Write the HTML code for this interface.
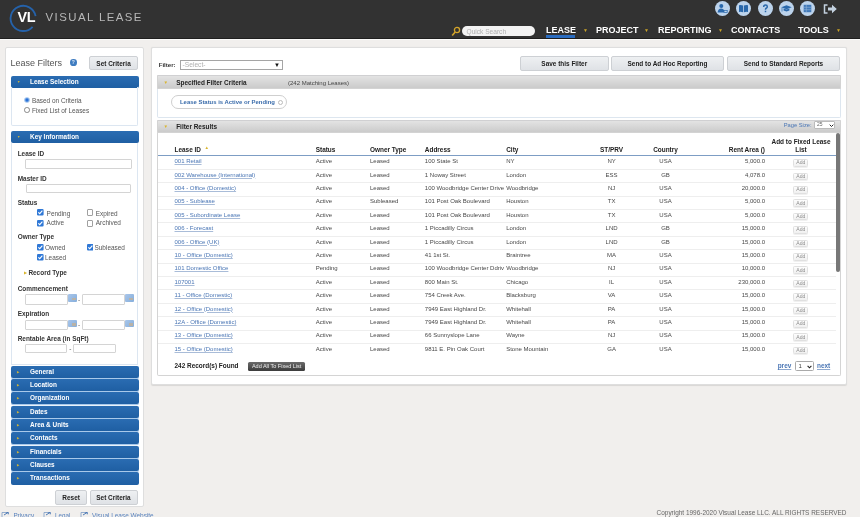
<!DOCTYPE html>
<html><head><meta charset="utf-8">
<style>
*{box-sizing:border-box;margin:0;padding:0}
html,body{width:860px;height:517px;overflow:hidden;background:#f1efed;font-family:"Liberation Sans",sans-serif;color:#333}
.a{position:absolute;white-space:nowrap}
#hdr{left:0;top:0;width:860px;height:38.6px;background:#323232;border-bottom:1px solid #1f1f1f}
.nav{color:#fff;font-weight:bold;font-size:9px;top:24px;line-height:12px}
.car{color:#c9a227;font-size:5px;top:27px;line-height:6px}
.ic{width:15px;height:15px;border-radius:50%;background:#b9d1ea;top:1px}
.panel{background:#fff;border:1px solid #dedede;border-radius:2px}
.bbar{left:11px;width:127.8px;height:12.2px;background:linear-gradient(#2a6cb2,#1f5fa3);border-radius:2px;color:#fff;font-weight:bold;font-size:6.45px;line-height:12px}
.bbar i{position:absolute;left:6px;top:0;color:#cbb13a;font-style:normal;font-size:3.4px}
.bbar.s{box-shadow:0 1.2px 0 #a9c9ea}
.bbar span{position:absolute;left:19px;top:0}
.lbl{font-size:6.45px;font-weight:bold;color:#333;left:17.7px;line-height:8px}
.txt{font-size:6.45px;color:#555;line-height:8px}
.inp{background:#fff;border:1px solid #d4d4d4;border-radius:1px}
.cal{width:8.6px;height:7.5px;background:linear-gradient(135deg,#a9c6ea,#86aedb);border-radius:1px}
.cal:after{content:"";position:absolute;left:3.5px;top:3.5px;width:4px;height:2.5px;background:#b9b2a6}
.cb{width:6.6px;height:6.6px;border-radius:1px}
.cb.on{background:#2f78d6}
.cb.off{border:0.8px solid #a0a0a0;background:#fff;margin:-0.3px 0 0 -0.3px}
.rd{width:5.6px;height:5.6px;border-radius:50%}
.gbtn{background:linear-gradient(#eef0f2,#dfe2e6);border:1px solid #cdd0d4;border-radius:2px;font-size:6.45px;font-weight:bold;color:#222;text-align:center}
.gbar{background:linear-gradient(#e3e3e3,#cbcbcb);border:1px solid #d3d3d3;border-top-color:#d0d0d2;border-radius:1px;font-size:6.45px;font-weight:bold;color:#222}
.gbar i{position:absolute;left:5.5px;top:0;color:#d9b52e;font-style:normal;font-size:4.5px}
.th{font-size:6.45px;font-weight:bold;color:#222;line-height:8px}
.td{font-size:6px;color:#484848;line-height:8px}
.td.c{width:40px;text-align:center}
.td.r{width:60px;text-align:right}
.lk{color:#4a76b5;text-decoration:underline;text-decoration-color:#a9bcd8}
.addb{width:15.2px;height:7.5px;border:1px solid #e0e0e0;border-radius:1.5px;background:linear-gradient(#fdfdfd,#f0f0f0);box-shadow:0 0.5px 0.5px rgba(0,0,0,.12);font-size:5.1px;color:#8c8c8c;text-align:center;line-height:5.8px;padding-top:0.3px}
.sep{left:158px;width:678px;height:1px;background:#eeeeee}
html{filter:blur(0.35px)}
</style></head><body>
<div id="hdr" class="a">
  <svg class="a" style="left:8px;top:3px" width="32" height="30" viewBox="0 0 32 30">
    <path d="M27.6 13.2 A12.6 12.6 0 1 0 24.6 23.8" fill="none" stroke="#2562aa" stroke-width="1.8"/>
  </svg>
  <div class="a" style="left:17.6px;top:10px;color:#fff;font-weight:bold;font-size:14.4px;letter-spacing:-0.4px;line-height:15px">VL</div>
  <div class="a" style="left:45.5px;top:11px;color:#b8b8b8;font-size:11.4px;letter-spacing:1.45px;line-height:13px">VISUAL LEASE</div>

  <svg class="a" style="left:714.8px;top:1.2px" width="15" height="15" viewBox="0 0 15 15"><circle cx="7.5" cy="7.5" r="7.5" fill="#bcd3ec"/><circle cx="6.3" cy="5" r="2" fill="#2a68ab"/><path d="M2.6 11.6 Q3 7.8 6.3 7.6 Q8.2 7.7 9 9 L9 11.6 Z" fill="#2a68ab"/><rect x="8.6" y="9" width="4" height="2.8" rx="0.5" fill="#2a68ab"/><rect x="9.4" y="9.7" width="2.4" height="1.3" fill="#bcd3ec"/></svg>
  <svg class="a" style="left:736px;top:1.2px" width="15" height="15" viewBox="0 0 15 15"><circle cx="7.5" cy="7.5" r="7.5" fill="#bcd3ec"/><path d="M3 4.3 Q5 3.8 7.1 4.6 L7.1 11.3 Q5 10.6 3 11 Z M7.9 4.6 Q10 3.8 12 4.3 L12 11 Q10 10.6 7.9 11.3 Z" fill="#2a68ab"/></svg>
  <svg class="a" style="left:757.5px;top:1.2px" width="15" height="15" viewBox="0 0 15 15"><circle cx="7.5" cy="7.5" r="7.5" fill="#bcd3ec"/><path d="M5.7 5.9 Q5.7 4.1 7.5 4.1 Q9.3 4.1 9.3 5.7 Q9.3 6.7 8.2 7.2 Q7.5 7.6 7.5 8.7" fill="none" stroke="#2a68ab" stroke-width="1.5"/><rect x="6.75" y="9.7" width="1.5" height="1.5" fill="#2a68ab"/></svg>
  <svg class="a" style="left:778.6px;top:1.2px" width="15" height="15" viewBox="0 0 15 15"><circle cx="7.5" cy="7.5" r="7.5" fill="#bcd3ec"/><path d="M2.3 6.3 L7.5 4.3 L12.7 6.3 L7.5 8.3 Z" fill="#2a68ab"/><path d="M4.6 7.4 L4.6 9.6 Q7.5 11.2 10.4 9.6 L10.4 7.4 L7.5 8.6 Z" fill="#2a68ab"/><path d="M3 6.6 L3 10.5" stroke="#2a68ab" stroke-width="0.7"/></svg>
  <svg class="a" style="left:800px;top:1.2px" width="15" height="15" viewBox="0 0 15 15"><circle cx="7.5" cy="7.5" r="7.5" fill="#bcd3ec"/><rect x="3.7" y="3.8" width="7.6" height="7.4" fill="#3f78b8"/><path d="M6.3 3.8 V11.2 M3.7 6.3 H11.3 M3.7 8.7 H11.3" stroke="#8fb0d6" stroke-width="0.6"/></svg>
  <svg class="a" style="left:822.5px;top:3.5px" width="15" height="10" viewBox="0 0 15 10"><path d="M4.5 1 H1.5 V9 H4.5" fill="none" stroke="#c3d1df" stroke-width="1.5"/><path d="M5 3.6 H9 V0.8 L13.8 5 L9 9.2 V6.4 H5 Z" fill="#c3d1df"/></svg>
  <svg class="a" style="left:450.5px;top:25.5px" width="10" height="11" viewBox="0 0 10 11"><circle cx="6" cy="4" r="2.6" fill="none" stroke="#d4a52a" stroke-width="1.3"/><path d="M4.2 5.9 L1.2 9.6" stroke="#d4a52a" stroke-width="1.6"/></svg>

  <div class="a" style="left:461.5px;top:25.6px;width:73.7px;height:10.9px;background:#f3f3f3;border-radius:5.5px;font-size:6.6px;color:#b0b0b0;line-height:12px;padding-left:5px">Quick Search</div>
  <div class="a nav" style="left:546px">LEASE</div>
  <div class="a" style="left:546px;top:35px;width:29px;height:3px;background:#2a6cc0"></div>
  <div class="a car" style="left:583px">&#9660;</div>
  <div class="a nav" style="left:596px">PROJECT</div>
  <div class="a car" style="left:644px">&#9660;</div>
  <div class="a nav" style="left:658px">REPORTING</div>
  <div class="a car" style="left:718px">&#9660;</div>
  <div class="a nav" style="left:731px">CONTACTS</div>
  <div class="a nav" style="left:798px">TOOLS</div>
  <div class="a car" style="left:836px">&#9660;</div>
</div>

<div class="a" style="left:0;top:38.6px;width:860px;height:1.6px;background:#fbfbfa"></div>
<!-- left panel -->
<div class="a panel" style="left:5px;top:46.5px;width:138.5px;height:460.5px"></div>
<div class="a" style="left:10.5px;top:57px;font-size:9px;color:#555;line-height:12px">Lease Filters</div>
<div class="a" style="left:70px;top:59.4px;width:6.7px;height:6.7px;border-radius:50%;background:#3f7cc0;color:#dce8f5;font-size:5px;font-weight:bold;line-height:6.7px;text-align:center">?</div>
<div class="a gbtn" style="left:89.4px;top:55.7px;width:48.3px;height:14.7px;line-height:13px">Set Criteria</div>

<div class="a bbar" style="top:75.7px"><i>&#9660;</i><span>Lease Selection</span></div>
<div class="a" style="left:11.2px;top:87px;width:127px;height:39.3px;border:1px solid #dce6f1;border-top:none;border-radius:0 0 2px 2px"></div>
<svg class="a" style="left:24px;top:96.8px" width="6" height="6" viewBox="0 0 6 6"><circle cx="3" cy="3" r="2.8" fill="#9cc0ec"/><circle cx="3" cy="3" r="1.7" fill="#2a72d8"/></svg>
<div class="a rd" style="left:24.2px;top:107px;border:1px solid #888;background:#fff"></div>
<div class="a txt" style="left:31.9px;top:96.7px">Based on Criteria</div>
<div class="a txt" style="left:31.9px;top:106.7px">Fixed List of Leases</div>

<div class="a bbar" style="top:131.2px"><i>&#9660;</i><span>Key Information</span></div>
<div class="a" style="left:11.2px;top:143px;width:127px;height:222px;border:1px solid #dce6f1;border-top:none"></div>

<div class="a lbl" style="top:150px">Lease ID</div>
<div class="a inp" style="left:25px;top:159.3px;width:107px;height:9.3px"></div>
<div class="a lbl" style="top:174.5px">Master ID</div>
<div class="a inp" style="left:25.5px;top:184px;width:105.7px;height:8.8px"></div>
<div class="a lbl" style="top:198.8px">Status</div>
<svg class="a" style="left:37.0px;top:209.1px" width="6.6" height="6.6" viewBox="0 0 6 6"><rect width="6" height="6" rx="1" fill="#2f78d6"/><path d="M1.2 3 L2.5 4.3 L4.9 1.5" fill="none" stroke="#fff" stroke-width="1"/></svg>
<div class="a txt" style="left:46.6px;top:209.8px">Pending</div>
<div class="a cb off" style="left:86.9px;top:209.4px"></div>
<div class="a txt" style="left:95.8px;top:209.8px">Expired</div>
<svg class="a" style="left:37.0px;top:220.1px" width="6.6" height="6.6" viewBox="0 0 6 6"><rect width="6" height="6" rx="1" fill="#2f78d6"/><path d="M1.2 3 L2.5 4.3 L4.9 1.5" fill="none" stroke="#fff" stroke-width="1"/></svg>
<div class="a txt" style="left:46.6px;top:219.4px">Active</div>
<div class="a cb off" style="left:86.9px;top:220.4px"></div>
<div class="a txt" style="left:95.8px;top:219.4px">Archived</div>
<div class="a lbl" style="top:232.9px">Owner Type</div>
<svg class="a" style="left:37.0px;top:244.4px" width="6.6" height="6.6" viewBox="0 0 6 6"><rect width="6" height="6" rx="1" fill="#2f78d6"/><path d="M1.2 3 L2.5 4.3 L4.9 1.5" fill="none" stroke="#fff" stroke-width="1"/></svg>
<div class="a txt" style="left:45px;top:243.7px">Owned</div>
<svg class="a" style="left:86.7px;top:244.4px" width="6.6" height="6.6" viewBox="0 0 6 6"><rect width="6" height="6" rx="1" fill="#2f78d6"/><path d="M1.2 3 L2.5 4.3 L4.9 1.5" fill="none" stroke="#fff" stroke-width="1"/></svg>
<div class="a txt" style="left:94.5px;top:243.7px">Subleased</div>
<svg class="a" style="left:37.0px;top:254.4px" width="6.6" height="6.6" viewBox="0 0 6 6"><rect width="6" height="6" rx="1" fill="#2f78d6"/><path d="M1.2 3 L2.5 4.3 L4.9 1.5" fill="none" stroke="#fff" stroke-width="1"/></svg>
<div class="a txt" style="left:45px;top:253.7px">Leased</div>
<div class="a" style="left:24px;top:269.5px;color:#d9b52e;font-size:4px;line-height:6px">&#9654;</div>
<div class="a lbl" style="left:28.4px;top:268.9px">Record Type</div>

<div class="a lbl" style="top:284.8px">Commencement</div>
<div class="a inp" style="left:25.2px;top:294.3px;width:43.2px;height:10.4px"></div>
<div class="a cal" style="left:68.4px;top:294.3px"></div>
<div class="a txt" style="left:78px;top:295.5px">-</div>
<div class="a inp" style="left:82.2px;top:294.3px;width:43.1px;height:10.4px"></div>
<div class="a cal" style="left:125.3px;top:294.3px"></div>
<div class="a lbl" style="top:309.6px">Expiration</div>
<div class="a inp" style="left:25.2px;top:319.6px;width:43.2px;height:10px"></div>
<div class="a cal" style="left:68.4px;top:319.6px"></div>
<div class="a txt" style="left:78px;top:320.8px">-</div>
<div class="a inp" style="left:82.2px;top:319.6px;width:43.1px;height:10px"></div>
<div class="a cal" style="left:125.3px;top:319.6px"></div>
<div class="a lbl" style="top:335.2px">Rentable Area (in SqFt)</div>
<div class="a inp" style="left:24.8px;top:343.9px;width:42.7px;height:9.5px"></div>
<div class="a txt" style="left:69.3px;top:344.8px">-</div>
<div class="a inp" style="left:73px;top:343.9px;width:42.8px;height:9.5px"></div>

<div class="a bbar s" style="top:365.5px"><i>&#9654;</i><span>General</span></div>
<div class="a bbar s" style="top:378.86px"><i>&#9654;</i><span>Location</span></div>
<div class="a bbar s" style="top:392.22px"><i>&#9654;</i><span>Organization</span></div>
<div class="a bbar s" style="top:405.58px"><i>&#9654;</i><span>Dates</span></div>
<div class="a bbar s" style="top:418.94px"><i>&#9654;</i><span>Area &amp; Units</span></div>
<div class="a bbar s" style="top:432.3px"><i>&#9654;</i><span>Contacts</span></div>
<div class="a bbar s" style="top:445.66px"><i>&#9654;</i><span>Financials</span></div>
<div class="a bbar s" style="top:459.02px"><i>&#9654;</i><span>Clauses</span></div>
<div class="a bbar" style="top:472.38px"><i>&#9654;</i><span>Transactions</span></div>

<div class="a gbtn" style="left:55.3px;top:489.5px;width:31.7px;height:15.2px;line-height:14px">Reset</div>
<div class="a gbtn" style="left:89.5px;top:489.5px;width:48px;height:15.2px;line-height:14px">Set Criteria</div>

<!-- footer -->
<svg class="a" style="left:1.2px;top:512px" width="8" height="5" viewBox="0 0 8 5"><path d="M5 0.5 H1 V5" fill="none" stroke="#7e9cc4" stroke-width="0.8"/><path d="M3 3 L7 0.5 M5 0.3 H7.3 V2.3" fill="none" stroke="#3d6eb0" stroke-width="0.9"/></svg>
<svg class="a" style="left:43px;top:512px" width="8" height="5" viewBox="0 0 8 5"><path d="M5 0.5 H1 V5" fill="none" stroke="#7e9cc4" stroke-width="0.8"/><path d="M3 3 L7 0.5 M5 0.3 H7.3 V2.3" fill="none" stroke="#3d6eb0" stroke-width="0.9"/></svg>
<svg class="a" style="left:80px;top:512px" width="8" height="5" viewBox="0 0 8 5"><path d="M5 0.5 H1 V5" fill="none" stroke="#7e9cc4" stroke-width="0.8"/><path d="M3 3 L7 0.5 M5 0.3 H7.3 V2.3" fill="none" stroke="#3d6eb0" stroke-width="0.9"/></svg>
<div class="a" style="left:13.4px;top:512px;font-size:6.3px;color:#5a83bd;line-height:8px">Privacy</div>
<div class="a" style="left:55px;top:512px;font-size:6.3px;color:#5a83bd;line-height:8px">Legal</div>
<div class="a" style="left:92px;top:512px;font-size:6.45px;color:#5a83bd;line-height:8px">Visual Lease Website</div>
<div class="a" style="left:656.6px;top:508.5px;font-size:6.45px;color:#666;line-height:8px">Copyright 1996-2020 Visual Lease LLC. ALL RIGHTS RESERVED</div>

<!-- main panel -->
<div class="a panel" style="left:151px;top:47px;width:695.5px;height:338.3px;box-shadow:0 0.6px 1px rgba(0,0,0,.1)"></div>
<div class="a" style="left:158.7px;top:61px;font-size:6.1px;font-weight:bold;color:#333;line-height:8px">Filter:</div>
<div class="a" style="left:180px;top:60px;width:102.8px;height:9.6px;border:1px solid #a5a5a5;background:#fff;font-size:6.7px;color:#b0b0b0;line-height:8px;padding-left:1.5px">-Select-</div>
<div class="a" style="left:274px;top:61px;font-size:6px;color:#111;line-height:8px">&#9660;</div>
<div class="a gbtn" style="left:520px;top:56.3px;width:88.5px;height:14.7px;line-height:13px;font-size:6.45px">Save this Filter</div>
<div class="a gbtn" style="left:611px;top:56.3px;width:113px;height:14.7px;line-height:13px;font-size:6.45px">Send to Ad Hoc Reporting</div>
<div class="a gbtn" style="left:727px;top:56.3px;width:113px;height:14.7px;line-height:13px;font-size:6.45px">Send to Standard Reports</div>

<div class="a gbar" style="left:157px;top:75px;width:684px;height:14.2px;line-height:14.2px"><i>&#9660;</i><span class="a" style="left:18.2px;top:0">Specified Filter Criteria</span><span class="a" style="left:130px;top:0;font-weight:normal;font-size:6px;color:#444">(242 Matching Leases)</span></div>
<div class="a" style="left:157px;top:89.2px;width:684px;height:29px;border:1px solid #dde6ef;border-top:none;border-radius:0 0 2px 2px"></div>
<div class="a" style="left:171px;top:95px;width:115.6px;height:14.4px;border:1px solid #cfcfcf;border-radius:7.2px;background:#fff"></div>
<div class="a" style="left:180px;top:98.2px;font-size:5.93px;font-weight:bold;color:#3a6cab;line-height:8px">Lease Status is Active or Pending</div>
<div class="a" style="left:277.6px;top:99.6px;width:5px;height:5px;border-radius:50%;border:1px solid #bbb"></div>

<div class="a gbar" style="left:157px;top:120px;width:684px;height:12.8px;line-height:12.6px"><i>&#9660;</i><span class="a" style="left:18.2px;top:0">Filter Results</span></div>
<div class="a" style="left:783.7px;top:121.3px;font-size:5.77px;color:#4a76b5;line-height:8px">Page Size:</div>
<div class="a" style="left:814.2px;top:121.4px;width:21px;height:7.3px;border:1px solid #bbb;border-radius:1px;background:#fff;font-size:5px;color:#666;line-height:5.6px;padding-left:1.8px">25</div>
<svg class="a" style="left:828.8px;top:123.6px" width="5" height="4" viewBox="0 0 5 4"><path d="M0.7 0.7 L2.5 2.5 L4.3 0.7" fill="none" stroke="#222" stroke-width="1"/></svg>
<div class="a" style="left:157px;top:132.8px;width:683.5px;height:243px;border:1px solid #d4d4d4;border-top:none;border-radius:0 0 2px 2px"></div>
<div class="a" style="left:836px;top:133px;width:4.4px;height:139px;background:#777;border-radius:2px"></div>

<div class="a th" style="left:174.5px;top:145.6px">Lease ID</div>
<div class="a" style="left:204.5px;top:144.4px;color:#d9b52e;font-size:4.5px;line-height:8px">&#9650;</div>
<div class="a th" style="left:315.7px;top:145.6px">Status</div>
<div class="a th" style="left:370px;top:145.6px">Owner Type</div>
<div class="a th" style="left:424.8px;top:145.6px">Address</div>
<div class="a th" style="left:506.2px;top:145.6px">City</div>
<div class="a th" style="left:591.6px;top:145.6px;width:40px;text-align:center">ST/PRV</div>
<div class="a th" style="left:645.5px;top:145.6px;width:40px;text-align:center">Country</div>
<div class="a th" style="left:705px;top:145.6px;width:60px;text-align:right">Rent Area ()</div>
<div class="a th" style="left:770px;top:137.8px;width:62px;text-align:center;white-space:normal;line-height:8.2px">Add to Fixed Lease List</div>
<div class="a" style="left:158px;top:154.8px;width:678px;height:1.2px;background:#7d9dc4"></div>

<div class="a td lk" style="left:174.5px;top:157.20px">001 Retail</div>
<div class="a td" style="left:315.7px;top:157.20px">Active</div>
<div class="a td" style="left:370px;top:157.20px">Leased</div>
<div class="a td" style="left:424.8px;top:157.20px">100 State St</div>
<div class="a td" style="left:506.2px;top:157.20px">NY</div>
<div class="a td c" style="left:591.6px;top:157.20px">NY</div>
<div class="a td c" style="left:645.5px;top:157.20px">USA</div>
<div class="a td r" style="left:705px;top:157.20px">5,000.0</div>
<div class="a addb" style="left:793.3px;top:159.20px">Add</div>
<div class="a sep" style="top:168.70px"></div>
<div class="a td lk" style="left:174.5px;top:170.60px">002 Warehouse (International)</div>
<div class="a td" style="left:315.7px;top:170.60px">Active</div>
<div class="a td" style="left:370px;top:170.60px">Leased</div>
<div class="a td" style="left:424.8px;top:170.60px">1 Noway Street</div>
<div class="a td" style="left:506.2px;top:170.60px">London</div>
<div class="a td c" style="left:591.6px;top:170.60px">ESS</div>
<div class="a td c" style="left:645.5px;top:170.60px">GB</div>
<div class="a td r" style="left:705px;top:170.60px">4,078.0</div>
<div class="a addb" style="left:793.3px;top:172.60px">Add</div>
<div class="a sep" style="top:182.10px"></div>
<div class="a td lk" style="left:174.5px;top:184.00px">004 - Office (Domestic)</div>
<div class="a td" style="left:315.7px;top:184.00px">Active</div>
<div class="a td" style="left:370px;top:184.00px">Leased</div>
<div class="a td" style="left:424.8px;top:184.00px">100 Woodbridge Center Drive</div>
<div class="a td" style="left:506.2px;top:184.00px">Woodbridge</div>
<div class="a td c" style="left:591.6px;top:184.00px">NJ</div>
<div class="a td c" style="left:645.5px;top:184.00px">USA</div>
<div class="a td r" style="left:705px;top:184.00px">20,000.0</div>
<div class="a addb" style="left:793.3px;top:186.00px">Add</div>
<div class="a sep" style="top:195.50px"></div>
<div class="a td lk" style="left:174.5px;top:197.40px">005 - Sublease</div>
<div class="a td" style="left:315.7px;top:197.40px">Active</div>
<div class="a td" style="left:370px;top:197.40px">Subleased</div>
<div class="a td" style="left:424.8px;top:197.40px">101 Post Oak Boulevard</div>
<div class="a td" style="left:506.2px;top:197.40px">Houston</div>
<div class="a td c" style="left:591.6px;top:197.40px">TX</div>
<div class="a td c" style="left:645.5px;top:197.40px">USA</div>
<div class="a td r" style="left:705px;top:197.40px">5,000.0</div>
<div class="a addb" style="left:793.3px;top:199.40px">Add</div>
<div class="a sep" style="top:208.90px"></div>
<div class="a td lk" style="left:174.5px;top:210.80px">005 - Subordinate Lease</div>
<div class="a td" style="left:315.7px;top:210.80px">Active</div>
<div class="a td" style="left:370px;top:210.80px">Leased</div>
<div class="a td" style="left:424.8px;top:210.80px">101 Post Oak Boulevard</div>
<div class="a td" style="left:506.2px;top:210.80px">Houston</div>
<div class="a td c" style="left:591.6px;top:210.80px">TX</div>
<div class="a td c" style="left:645.5px;top:210.80px">USA</div>
<div class="a td r" style="left:705px;top:210.80px">5,000.0</div>
<div class="a addb" style="left:793.3px;top:212.80px">Add</div>
<div class="a sep" style="top:222.30px"></div>
<div class="a td lk" style="left:174.5px;top:224.20px">006 - Forecast</div>
<div class="a td" style="left:315.7px;top:224.20px">Active</div>
<div class="a td" style="left:370px;top:224.20px">Leased</div>
<div class="a td" style="left:424.8px;top:224.20px">1 Piccadilly Circus</div>
<div class="a td" style="left:506.2px;top:224.20px">London</div>
<div class="a td c" style="left:591.6px;top:224.20px">LND</div>
<div class="a td c" style="left:645.5px;top:224.20px">GB</div>
<div class="a td r" style="left:705px;top:224.20px">15,000.0</div>
<div class="a addb" style="left:793.3px;top:226.20px">Add</div>
<div class="a sep" style="top:235.70px"></div>
<div class="a td lk" style="left:174.5px;top:237.60px">006 - Office (UK)</div>
<div class="a td" style="left:315.7px;top:237.60px">Active</div>
<div class="a td" style="left:370px;top:237.60px">Leased</div>
<div class="a td" style="left:424.8px;top:237.60px">1 Piccadilly Circus</div>
<div class="a td" style="left:506.2px;top:237.60px">London</div>
<div class="a td c" style="left:591.6px;top:237.60px">LND</div>
<div class="a td c" style="left:645.5px;top:237.60px">GB</div>
<div class="a td r" style="left:705px;top:237.60px">15,000.0</div>
<div class="a addb" style="left:793.3px;top:239.60px">Add</div>
<div class="a sep" style="top:249.10px"></div>
<div class="a td lk" style="left:174.5px;top:251.00px">10 - Office (Domestic)</div>
<div class="a td" style="left:315.7px;top:251.00px">Active</div>
<div class="a td" style="left:370px;top:251.00px">Leased</div>
<div class="a td" style="left:424.8px;top:251.00px">41 1st St.</div>
<div class="a td" style="left:506.2px;top:251.00px">Braintree</div>
<div class="a td c" style="left:591.6px;top:251.00px">MA</div>
<div class="a td c" style="left:645.5px;top:251.00px">USA</div>
<div class="a td r" style="left:705px;top:251.00px">15,000.0</div>
<div class="a addb" style="left:793.3px;top:253.00px">Add</div>
<div class="a sep" style="top:262.50px"></div>
<div class="a td lk" style="left:174.5px;top:264.40px">101 Domestic Office</div>
<div class="a td" style="left:315.7px;top:264.40px">Pending</div>
<div class="a td" style="left:370px;top:264.40px">Leased</div>
<div class="a td" style="left:424.8px;top:264.40px">100 Woodbridge Center Ddriv</div>
<div class="a td" style="left:506.2px;top:264.40px">Woodbridge</div>
<div class="a td c" style="left:591.6px;top:264.40px">NJ</div>
<div class="a td c" style="left:645.5px;top:264.40px">USA</div>
<div class="a td r" style="left:705px;top:264.40px">10,000.0</div>
<div class="a addb" style="left:793.3px;top:266.40px">Add</div>
<div class="a sep" style="top:275.90px"></div>
<div class="a td lk" style="left:174.5px;top:277.80px">107001</div>
<div class="a td" style="left:315.7px;top:277.80px">Active</div>
<div class="a td" style="left:370px;top:277.80px">Leased</div>
<div class="a td" style="left:424.8px;top:277.80px">800 Main St.</div>
<div class="a td" style="left:506.2px;top:277.80px">Chicago</div>
<div class="a td c" style="left:591.6px;top:277.80px">IL</div>
<div class="a td c" style="left:645.5px;top:277.80px">USA</div>
<div class="a td r" style="left:705px;top:277.80px">230,000.0</div>
<div class="a addb" style="left:793.3px;top:279.80px">Add</div>
<div class="a sep" style="top:289.30px"></div>
<div class="a td lk" style="left:174.5px;top:291.20px">11 - Office (Domestic)</div>
<div class="a td" style="left:315.7px;top:291.20px">Active</div>
<div class="a td" style="left:370px;top:291.20px">Leased</div>
<div class="a td" style="left:424.8px;top:291.20px">754 Creek Ave.</div>
<div class="a td" style="left:506.2px;top:291.20px">Blacksburg</div>
<div class="a td c" style="left:591.6px;top:291.20px">VA</div>
<div class="a td c" style="left:645.5px;top:291.20px">USA</div>
<div class="a td r" style="left:705px;top:291.20px">15,000.0</div>
<div class="a addb" style="left:793.3px;top:293.20px">Add</div>
<div class="a sep" style="top:302.70px"></div>
<div class="a td lk" style="left:174.5px;top:304.60px">12 - Office (Domestic)</div>
<div class="a td" style="left:315.7px;top:304.60px">Active</div>
<div class="a td" style="left:370px;top:304.60px">Leased</div>
<div class="a td" style="left:424.8px;top:304.60px">7949 East Highland Dr.</div>
<div class="a td" style="left:506.2px;top:304.60px">Whitehall</div>
<div class="a td c" style="left:591.6px;top:304.60px">PA</div>
<div class="a td c" style="left:645.5px;top:304.60px">USA</div>
<div class="a td r" style="left:705px;top:304.60px">15,000.0</div>
<div class="a addb" style="left:793.3px;top:306.60px">Add</div>
<div class="a sep" style="top:316.10px"></div>
<div class="a td lk" style="left:174.5px;top:318.00px">12A - Office (Domestic)</div>
<div class="a td" style="left:315.7px;top:318.00px">Active</div>
<div class="a td" style="left:370px;top:318.00px">Leased</div>
<div class="a td" style="left:424.8px;top:318.00px">7949 East Highland Dr.</div>
<div class="a td" style="left:506.2px;top:318.00px">Whitehall</div>
<div class="a td c" style="left:591.6px;top:318.00px">PA</div>
<div class="a td c" style="left:645.5px;top:318.00px">USA</div>
<div class="a td r" style="left:705px;top:318.00px">15,000.0</div>
<div class="a addb" style="left:793.3px;top:320.00px">Add</div>
<div class="a sep" style="top:329.50px"></div>
<div class="a td lk" style="left:174.5px;top:331.40px">13 - Office (Domestic)</div>
<div class="a td" style="left:315.7px;top:331.40px">Active</div>
<div class="a td" style="left:370px;top:331.40px">Leased</div>
<div class="a td" style="left:424.8px;top:331.40px">66 Sunnyslope Lane</div>
<div class="a td" style="left:506.2px;top:331.40px">Wayne</div>
<div class="a td c" style="left:591.6px;top:331.40px">NJ</div>
<div class="a td c" style="left:645.5px;top:331.40px">USA</div>
<div class="a td r" style="left:705px;top:331.40px">15,000.0</div>
<div class="a addb" style="left:793.3px;top:333.40px">Add</div>
<div class="a sep" style="top:342.90px"></div>
<div class="a td lk" style="left:174.5px;top:344.80px">15 - Office (Domestic)</div>
<div class="a td" style="left:315.7px;top:344.80px">Active</div>
<div class="a td" style="left:370px;top:344.80px">Leased</div>
<div class="a td" style="left:424.8px;top:344.80px">9811 E. Pin Oak Court</div>
<div class="a td" style="left:506.2px;top:344.80px">Stone Mountain</div>
<div class="a td c" style="left:591.6px;top:344.80px">GA</div>
<div class="a td c" style="left:645.5px;top:344.80px">USA</div>
<div class="a td r" style="left:705px;top:344.80px">15,000.0</div>
<div class="a addb" style="left:793.3px;top:346.80px">Add</div>

<div class="a th" style="left:174.5px;top:361.7px">242 Record(s) Found</div>
<div class="a" style="left:247.8px;top:362px;width:57.7px;height:8.7px;background:linear-gradient(#6a6a6a,#3c3c3c);border-radius:1.5px;font-size:5.5px;color:#eee;line-height:8.7px;text-align:center">Add All To Fixed List</div>
<div class="a" style="left:777.7px;top:362.2px;font-size:6.45px;font-weight:bold;color:#4a76b5;text-decoration:underline;text-decoration-color:#8fa9cf;line-height:8px">prev</div>
<div class="a" style="left:795.2px;top:361.3px;width:18.5px;height:9.3px;border:1px solid #aaa;border-radius:1.5px;background:#fff;font-size:6px;color:#444;line-height:7.3px;padding-left:2.3px;padding-top:0.6px">1</div>
<svg class="a" style="left:806.5px;top:364.5px" width="5" height="4" viewBox="0 0 5 4"><path d="M0.6 0.8 L2.5 2.8 L4.4 0.8" fill="none" stroke="#222" stroke-width="1.1"/></svg>
<div class="a" style="left:817px;top:362.2px;font-size:6.45px;font-weight:bold;color:#4a76b5;text-decoration:underline;text-decoration-color:#8fa9cf;line-height:8px">next</div>

</body></html>
